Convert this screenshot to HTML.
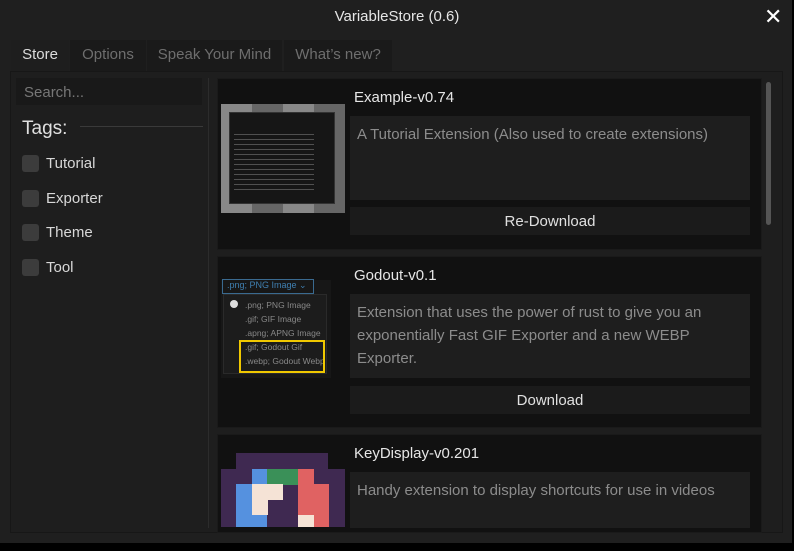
<!DOCTYPE html>
<html><head><style>
*{margin:0;padding:0;box-sizing:border-box}
body{width:794px;height:551px;background:#000;font-family:"Liberation Sans","DejaVu Sans",sans-serif;overflow:hidden;position:relative}
.a{position:absolute}
.win{left:0;top:0;width:792px;height:543px;background:#1f1f1f}
.t{color:#e6e6e6;font-size:15px}
.tab{top:40px;height:31px;font-size:15px;color:#6e6e6e;line-height:29px;text-align:center;background:#1a1a1a}
.card{left:217px;width:545px;background:#111;border:1px solid #1a1a1a}
.desc{background:#1e1e1e;color:#8c8c8c;font-size:15px;line-height:23px;padding:7px 7px}
.btn{background:#1b1b1b;color:#e0e0e0;font-size:15px;text-align:center;line-height:29px}
.cb{left:22px;width:17px;height:17px;background:#3c3c3c;border-radius:3px}
.lab{left:46px;color:#d8d8d8;font-size:15px}
.px{position:absolute;width:16px;height:16px}
</style></head><body>
<div class="a win"></div>
<div class="a t" style="left:0;width:794px;text-align:center;top:8px;font-size:15px">VariableStore (0.6)</div>
<div class="a" style="left:764px;top:4px;color:#fff;font-size:22px;font-weight:bold">✕</div>
<div class="a" style="left:10px;top:71px;width:773px;height:462px;border:1px solid #171717;background:#1e1e1e"></div>
<div class="a tab" style="left:11px;width:58px;background:#1e1e1e;color:#dcdcdc">Store</div>
<div class="a tab" style="left:70px;width:76px">Options</div>
<div class="a tab" style="left:147px;width:135px">Speak Your Mind</div>
<div class="a tab" style="left:284px;width:108px">What’s new?</div>
<div class="a" style="left:16px;top:78px;width:186px;height:27px;background:#191919;color:#777;font-size:15px;padding:6px 8px">Search...</div>
<div class="a" style="left:22px;top:118px;color:#e0e0e0;font-size:19px">Tags:</div>
<div class="a" style="left:80px;top:126px;width:123px;height:1px;background:#3a3a3a"></div>
<div class="a cb" style="top:155px"></div><div class="a lab" style="top:155px">Tutorial</div>
<div class="a cb" style="top:190px"></div><div class="a lab" style="top:190px">Exporter</div>
<div class="a cb" style="top:224px"></div><div class="a lab" style="top:224px">Theme</div>
<div class="a cb" style="top:259px"></div><div class="a lab" style="top:259px">Tool</div>
<div class="a" style="left:208px;top:78px;width:1px;height:450px;background:#2c2c2c"></div>
<div class="a" style="left:766px;top:82px;width:5px;height:143px;background:#555;border-radius:3px"></div>

<div class="a card" style="top:78px;height:172px"></div>
<div class="a" style="left:221px;top:104px;width:124px;height:109px;background:repeating-linear-gradient(90deg,#888 0 31px,#666 31px 62px)"></div>
<div class="a" style="left:229px;top:112px;width:106px;height:92px;background:#161616;border:1px solid #333"></div>
<div class="a" style="left:234px;top:130px;width:80px;height:60px;background:repeating-linear-gradient(#161616 0 4px,#777 4px 5px);opacity:.6"></div>
<div class="a t" style="left:354px;top:89px">Example-v0.74</div>
<div class="a desc" style="left:350px;top:116px;width:400px;height:84px">A Tutorial Extension (Also used to create extensions)</div>
<div class="a btn" style="left:350px;top:207px;width:400px;height:28px">Re-Download</div>

<div class="a card" style="top:256px;height:172px"></div>
<div class="a" style="left:221px;top:280px;width:110px;height:98px;background:#171717"></div>
<div class="a" style="left:222px;top:279px;width:92px;height:15px;border:1px solid #3a6a90;color:#3f7fb0;font-size:9px;padding-left:4px">.png; PNG Image ⌄</div>
<div class="a" style="left:223px;top:294px;width:104px;height:80px;background:#1c1c1c;border:1px solid #2a2a2a;color:#888;font-size:8.5px;line-height:14px;padding:3px 0 0 21px">.png; PNG Image<br>.gif; GIF Image<br>.apng; APNG Image<br>.gif; Godout Gif<br>.webp; Godout Webp</div>
<div class="a" style="left:230px;top:300px;width:8px;height:8px;border-radius:50%;background:#ddd"></div>
<div class="a" style="left:239px;top:340px;width:86px;height:33px;border:2px solid #f0c800"></div>
<div class="a t" style="left:354px;top:267px">Godout-v0.1</div>
<div class="a desc" style="left:350px;top:294px;width:400px;height:84px">Extension that uses the power of rust to give you an exponentially Fast GIF Exporter and a new WEBP Exporter.</div>
<div class="a btn" style="left:350px;top:386px;width:400px;height:28px">Download</div>

<div class="a card" style="top:434px;height:99px"></div>
<div class="a t" style="left:354px;top:445px">KeyDisplay-v0.201</div>
<div class="a desc" style="left:350px;top:472px;width:400px;height:56px">Handy extension to display shortcuts for use in videos</div>
<div class="a" style="left:221px;top:453px;width:124px;height:74px">
<div class="px" style="left:15px;top:0;width:92px;background:#3f2951"></div>
<div class="px" style="left:0;top:16px;width:124px;height:58px;background:#3f2951"></div>
<div class="px" style="left:31px;top:16px;background:#5591df"></div>
<div class="px" style="left:46px;top:16px;width:31px;background:#3a9058"></div>
<div class="px" style="left:77px;top:16px;height:58px;background:#e06262"></div>
<div class="px" style="left:92px;top:31px;height:43px;background:#e06262"></div>
<div class="px" style="left:15px;top:31px;height:43px;background:#5591df"></div>
<div class="px" style="left:15px;top:62px;width:31px;height:12px;background:#5591df"></div>
<div class="px" style="left:31px;top:31px;width:31px;background:#f5e3d6"></div>
<div class="px" style="left:31px;top:46px;background:#f5e3d6"></div>
<div class="px" style="left:77px;top:62px;height:12px;background:#f5e3d6"></div>
</div>
<div class="a" style="left:0;top:533px;width:792px;height:10px;background:#1f1f1f"></div>
</body></html>
